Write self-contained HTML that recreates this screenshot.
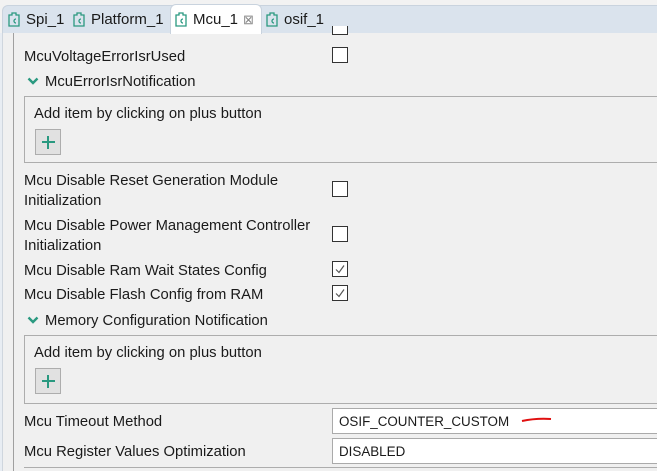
<!DOCTYPE html>
<html><head><meta charset="utf-8"><style>
*{margin:0;padding:0;box-sizing:border-box}
body{width:657px;height:471px;overflow:hidden;background:#f0f0f0;font-family:"Segoe UI","Liberation Sans",sans-serif;font-size:14.8px;color:#1a1a1a;position:relative}
.a{position:absolute;white-space:nowrap}
.t{margin-top:2px}
.tabbar{position:absolute;left:0;top:0;width:657px;height:33px;background:#f2f2f2}
.tabbg{position:absolute;left:2px;top:5px;width:660px;height:28px;background:#dae3ed;border:1px solid #c9d3de;border-bottom:none;border-radius:6px 0 0 0}
.tab{position:absolute;top:11px;font-size:15px;color:#1a1a1a;white-space:nowrap}
.act{position:absolute;left:170px;top:4px;width:92px;height:30px;background:#fff;border:1px solid #c9d3de;border-bottom:none;border-radius:6px 6px 0 0}
.ic{position:absolute;top:12px;width:12px;height:15px}
.cb{position:absolute;left:332px;width:16px;height:16px;border:1px solid #333;background:#fff}
.box{position:absolute;left:24px;width:640px;border:1px solid #adadad}
.plus{position:absolute;left:35px;width:26px;height:26px;background:#e1e1e1;border:1px solid #adadad}
.plus:before{content:"";position:absolute;left:6px;top:11px;width:13px;height:2px;background:#2a9980}
.plus:after{content:"";position:absolute;left:11px;top:6px;width:2px;height:13px;background:#2a9980}
.chev{position:absolute;left:27px;width:12px;height:8px}
.tf{position:absolute;left:332px;width:330px;height:26px;background:#fff;border:1px solid #aaa;padding:5px 0 0 6px;font-size:13.4px}
</style></head><body>
<div class="tabbar"><div class="tabbg"></div>
<div class="act"></div>
<svg class="ic" style="left:8px" viewBox="0 0 12 15"><path d="M1 3h3V1h4v2h3v11H1z M8 7a2 2 0 1 0 0 4" fill="none" stroke="#2a9980" stroke-width="1.3"/></svg>
<div class="tab" style="left:26px">Spi_1</div>
<svg class="ic" style="left:73px" viewBox="0 0 12 15"><path d="M1 3h3V1h4v2h3v11H1z M8 7a2 2 0 1 0 0 4" fill="none" stroke="#2a9980" stroke-width="1.3"/></svg>
<div class="tab" style="left:91px">Platform_1</div>
<svg class="ic" style="left:175px" viewBox="0 0 12 15"><path d="M1 3h3V1h4v2h3v11H1z M8 7a2 2 0 1 0 0 4" fill="none" stroke="#2a9980" stroke-width="1.3"/></svg>
<div class="tab" style="left:193px">Mcu_1</div>
<div class="tab" style="left:243px;top:12px;color:#888;font-size:13px">⊠</div>
<svg class="ic" style="left:266px" viewBox="0 0 12 15"><path d="M1 3h3V1h4v2h3v11H1z M8 7a2 2 0 1 0 0 4" fill="none" stroke="#2a9980" stroke-width="1.3"/></svg>
<div class="tab" style="left:284px">osif_1</div>
</div>
<div class="a" style="left:0;top:33px;width:3px;height:438px;background:#e8edf3;border-right:1px solid #cfd6de"></div>
<div class="a" style="left:13px;top:33px;width:1px;height:438px;background:#a0a0a0"></div>
<div class="cb" style="top:26px;height:9px;border-top:none"></div>
<div class="a t" style="left:24px;top:47px">McuVoltageErrorIsrUsed</div>
<div class="cb" style="top:47px"></div>
<svg class="chev" style="top:77px" viewBox="0 0 12 8"><path d="M1.5 1.5L6 6l4.5-4.5" fill="none" stroke="#2a9980" stroke-width="2.4"/></svg>
<div class="a t" style="left:45px;top:72px">McuErrorIsrNotification</div>
<div class="box" style="top:96px;height:67px"></div>
<div class="a t" style="left:34px;top:104px">Add item by clicking on plus button</div>
<div class="plus" style="top:129px"></div>
<div class="a t" style="left:24px;top:171px">Mcu Disable Reset Generation Module</div>
<div class="a t" style="left:24px;top:191px">Initialization</div>
<div class="cb" style="top:181px"></div>
<div class="a t" style="left:24px;top:216px">Mcu Disable Power Management Controller</div>
<div class="a t" style="left:24px;top:236px">Initialization</div>
<div class="cb" style="top:226px"></div>
<div class="a t" style="left:24px;top:261px">Mcu Disable Ram Wait States Config</div>
<div class="cb" style="top:261px"><svg width="14" height="14" viewBox="0 0 14 14"><path d="M3 7.5l3 3 5-7" fill="none" stroke="#555" stroke-width="1.2"/></svg></div>
<div class="a t" style="left:24px;top:285px">Mcu Disable Flash Config from RAM</div>
<div class="cb" style="top:285px"><svg width="14" height="14" viewBox="0 0 14 14"><path d="M3 7.5l3 3 5-7" fill="none" stroke="#555" stroke-width="1.2"/></svg></div>
<svg class="chev" style="top:316px" viewBox="0 0 12 8"><path d="M1.5 1.5L6 6l4.5-4.5" fill="none" stroke="#2a9980" stroke-width="2.4"/></svg>
<div class="a t" style="left:45px;top:311px">Memory Configuration Notification</div>
<div class="box" style="top:335px;height:69px"></div>
<div class="a t" style="left:34px;top:343px">Add item by clicking on plus button</div>
<div class="plus" style="top:368px"></div>
<div class="a t" style="left:24px;top:412px">Mcu Timeout Method</div>
<div class="tf" style="top:408px">OSIF_COUNTER_CUSTOM</div>
<svg class="a" style="left:520px;top:417px" width="34" height="6"><path d="M2 4Q16 1 31 2" fill="none" stroke="#e01010" stroke-width="2"/></svg>
<div class="a t" style="left:24px;top:442px">Mcu Register Values Optimization</div>
<div class="tf" style="top:438px">DISABLED</div>
<div class="a" style="left:24px;top:467px;width:640px;height:1px;background:#adadad"></div>
</body></html>
